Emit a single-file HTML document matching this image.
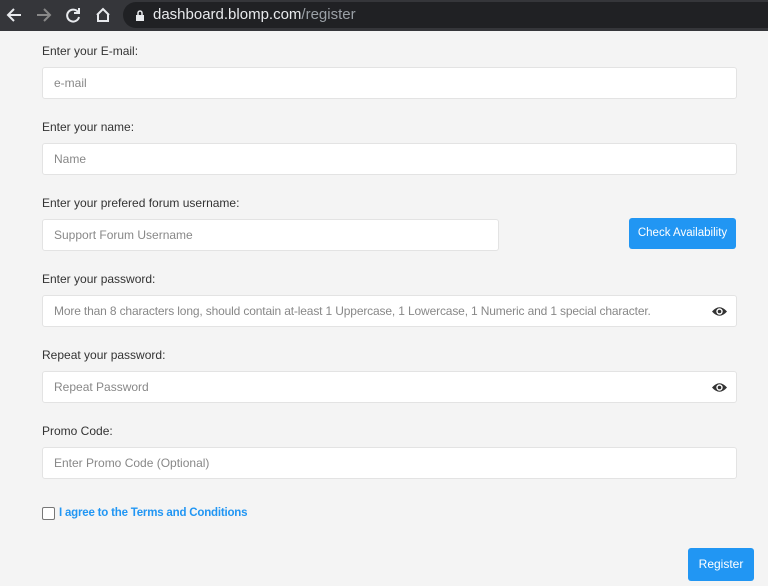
<!DOCTYPE html><html><head><style>
body{margin:0;width:768px;height:586px;background:#f4f4f4;font-family:"Liberation Sans",sans-serif;position:relative;overflow:hidden}
.bar{position:absolute;left:0;top:0;width:768px;height:31px;background:#35363a}
.url{position:absolute;left:123px;top:2px;width:660px;height:26px;border-radius:13px;background:#202124}
.url span{position:absolute;left:30px;top:4px;font-size:15px;color:#e8eaed}
.lbl{position:absolute;left:42px;font-size:12px;color:#333}
.in{position:absolute;left:42px;width:695px;height:32px;background:#fff;border:1px solid #e3e3e3;border-radius:3px;font-size:12px;color:#888;box-sizing:border-box;padding:8px 11px;white-space:nowrap;overflow:hidden}
.btn{position:absolute;background:#2196f3;color:#fff;font-size:11.5px;border-radius:3px;text-align:center}
.eye{position:absolute;right:8px;top:9px}
</style></head><body>
<div class="bar">
<svg width="120" height="31" style="position:absolute;left:0;top:0" fill="none" stroke-width="2">
<path d="M21 15H9M14 9l-6 6 6 6" stroke="#e8eaed"/>
<path d="M37 15h12M44 9l6 6-6 6" stroke="#888"/>
<path d="M78 12a6 6 0 1 0 1 5" stroke="#e8eaed"/><path d="M79 8v5h-5" stroke="#e8eaed"/>
<path d="M97 15l6-6 6 6M98 14v7h10v-7" stroke="#e8eaed"/>
</svg>
<div class="url"><svg width="10" height="12" style="position:absolute;left:12px;top:8px"><rect x="1" y="5" width="8" height="6" fill="#e8eaed"/><path d="M3 5V3a2 2 0 0 1 4 0v2" stroke="#e8eaed" fill="none" stroke-width="1.5"/></svg><span>dashboard.blomp.com<span style="position:static;color:#9aa0a6">/register</span></span></div>
</div>
<div class="lbl" style="top:44px">Enter your E-mail:</div>
<div class="in" style="top:67px">e-mail</div>
<div class="lbl" style="top:120px">Enter your name:</div>
<div class="in" style="top:143px">Name</div>
<div class="lbl" style="top:196px">Enter your prefered forum username:</div>
<div class="in" style="top:219px;width:457px">Support Forum Username</div>
<div class="btn" style="left:629px;top:218px;width:107px;height:31px;line-height:31px">Check Availability</div>
<div class="lbl" style="top:272px">Enter your password:</div>
<div class="in" style="top:295px;letter-spacing:-0.15px">More than 8 characters long, should contain at-least 1 Uppercase, 1 Lowercase, 1 Numeric and 1 special character.<svg class="eye" width="17" height="13"><path d="M1 6.5Q8.5-2 16 6.5Q8.5 15 1 6.5Z" fill="#333"/><circle cx="8.5" cy="6.5" r="3.2" fill="#fff"/><circle cx="8.5" cy="6.5" r="1.8" fill="#333"/></svg></div>
<div class="lbl" style="top:348px">Repeat your password:</div>
<div class="in" style="top:371px">Repeat Password<svg class="eye" width="17" height="13"><path d="M1 6.5Q8.5-2 16 6.5Q8.5 15 1 6.5Z" fill="#333"/><circle cx="8.5" cy="6.5" r="3.2" fill="#fff"/><circle cx="8.5" cy="6.5" r="1.8" fill="#333"/></svg></div>
<div class="lbl" style="top:424px">Promo Code:</div>
<div class="in" style="top:447px">Enter Promo Code (Optional)</div>
<div style="position:absolute;left:42px;top:507px;width:11px;height:11px;border:1px solid #777;border-radius:2px;background:#fff"></div>
<div style="position:absolute;left:59px;top:507px;font-size:11.5px;font-weight:bold;color:#2196f3;letter-spacing:-0.2px">I agree to the Terms and Conditions</div>
<div class="btn" style="left:688px;top:548px;width:66px;height:33px;line-height:33px;font-size:12px">Register</div>
</body></html>
